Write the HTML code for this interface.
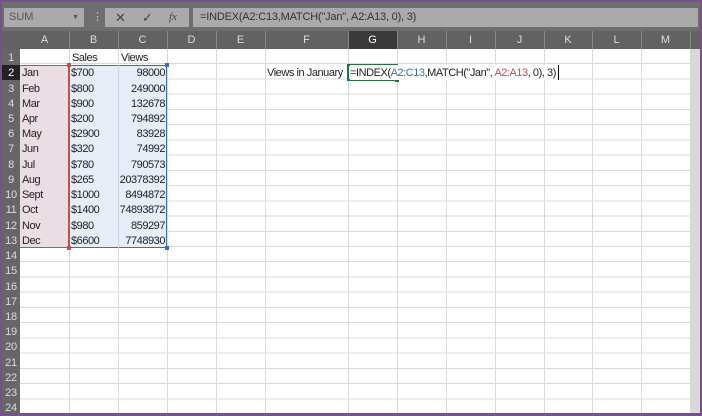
<!DOCTYPE html><html><head><style>
*{margin:0;padding:0;box-sizing:border-box}
body{width:702px;height:415px;overflow:hidden;position:relative;background:#7a4f8e;font-family:"Liberation Sans",sans-serif;font-size:11px;color:#222}
.a{position:absolute}
#tb{left:2px;top:2px;width:698px;height:29px;background:#6e6e6e}
#hdr{left:2px;top:31px;width:698px;height:18px;background:#626262}
#grid{left:20px;top:49px;width:670px;height:364px;background:#fff;
background-image:repeating-linear-gradient(to bottom,transparent 0,transparent 14.23px,#dadada 14.23px,#dadada 15.23px);}
.vl{position:absolute;top:49px;height:364px;width:1px;background:#dadada}
.hl{position:absolute;top:31px;height:18px;width:1px;background:#888}
.ch{position:absolute;top:31px;height:18px;line-height:18px;text-align:center;color:#ddd;font-size:11px}
#rh{left:2px;top:49px;width:18px;height:364px;background:#666}
.rn{position:absolute;left:2px;width:18px;text-align:center;color:#ddd;font-size:11px;height:15px;line-height:16px;letter-spacing:-0.3px}
.c{position:absolute;height:15px;line-height:16px;font-size:11px;letter-spacing:-0.45px;white-space:nowrap}
</style></head><body>
<div class="a" id="tb"></div>
<div class="a" style="left:4px;top:8px;width:80px;height:19px;background:#aaa"></div>
<div class="a" style="left:9px;top:8px;line-height:19px;color:#555;font-size:11px">SUM</div>
<div class="a" style="left:72px;top:8px;line-height:19px;color:#555;font-size:7px">▼</div>
<div class="a" style="left:92px;top:10px;color:#ccc;font-size:11px;line-height:14px">⋮</div>
<div class="a" style="left:105px;top:8px;width:84px;height:19px;background:#aaa"></div>
<div class="a" style="left:115px;top:8px;line-height:19px;color:#444;font-size:13px">✕</div>
<div class="a" style="left:142px;top:8px;line-height:19px;color:#444;font-size:13px">✓</div>
<div class="a" style="left:169px;top:8px;line-height:19px;color:#444;font-size:11px;font-style:italic;font-family:'Liberation Serif',serif">fx</div>
<div class="a" style="left:193px;top:8px;width:505px;height:19px;background:#aaa"></div>
<div class="a" style="left:200px;top:8px;line-height:19px;color:#333;font-size:11px;letter-spacing:-0.2px">=INDEX(A2:C13,MATCH("Jan", A2:A13, 0), 3)</div>
<div class="a" id="hdr"></div>
<div class="a" style="left:348px;top:31px;width:49px;height:18px;background:#3a3a3a"></div>
<div class="a" style="left:690px;top:49px;width:10px;height:364px;background:#d8d8d8"></div>
<div class="a" id="grid"></div>
<div class="a" id="rh"></div>
<div class="ch" style="left:20px;width:49px">A</div>
<div class="ch" style="left:69px;width:49px">B</div>
<div class="ch" style="left:118px;width:49px">C</div>
<div class="ch" style="left:167px;width:49px">D</div>
<div class="ch" style="left:216px;width:49px">E</div>
<div class="ch" style="left:265px;width:83px">F</div>
<div class="ch" style="left:348px;width:49px;color:#fff">G</div>
<div class="ch" style="left:397px;width:49px">H</div>
<div class="ch" style="left:446px;width:49px">I</div>
<div class="ch" style="left:495px;width:49px">J</div>
<div class="ch" style="left:544px;width:48px">K</div>
<div class="ch" style="left:592px;width:49px">L</div>
<div class="ch" style="left:641px;width:49px">M</div>
<div class="hl" style="left:69px"></div><div class="hl" style="left:118px"></div><div class="hl" style="left:167px"></div><div class="hl" style="left:216px"></div><div class="hl" style="left:265px"></div><div class="hl" style="left:348px"></div><div class="hl" style="left:397px"></div><div class="hl" style="left:446px"></div><div class="hl" style="left:495px"></div><div class="hl" style="left:544px"></div><div class="hl" style="left:592px"></div><div class="hl" style="left:641px"></div><div class="hl" style="left:690px"></div>
<div class="a" style="left:20px;top:65px;width:49px;height:183px;background:#eadde4;border:1px solid #c0504d;border-left:none"></div>
<div class="a" style="left:69px;top:65px;width:98px;height:183px;background:#e6edf7;border:1px solid #3f6fb0"></div>
<div class="vl" style="left:69px"></div><div class="vl" style="left:118px"></div><div class="vl" style="left:167px"></div><div class="vl" style="left:216px"></div><div class="vl" style="left:265px"></div><div class="vl" style="left:348px"></div><div class="vl" style="left:397px"></div><div class="vl" style="left:446px"></div><div class="vl" style="left:495px"></div><div class="vl" style="left:544px"></div><div class="vl" style="left:592px"></div><div class="vl" style="left:641px"></div><div class="vl" style="left:690px"></div>
<div class="a" style="left:68px;top:64px;width:2px;height:185px;background:#c0504d"></div>
<div class="a" style="left:20px;top:247px;width:49px;height:1px;background:#c0504d"></div>
<div class="a" style="left:166px;top:65px;width:1px;height:183px;background:#3f6fb0"></div>
<div class="a" style="left:69px;top:65px;width:98px;height:1px;background:#3f6fb0"></div>
<div class="a" style="left:69px;top:247px;width:98px;height:1px;background:#3f6fb0"></div>
<div class="a" style="left:118px;top:65px;width:1px;height:183px;background:#c6d3e6"></div>
<div class="a" style="left:67px;top:63px;width:4px;height:4px;background:#c0504d"></div>
<div class="a" style="left:67px;top:246px;width:4px;height:4px;background:#c0504d"></div>
<div class="a" style="left:165px;top:63px;width:4px;height:4px;background:#3f6fb0"></div>
<div class="a" style="left:165px;top:246px;width:4px;height:4px;background:#3f6fb0"></div>
<div class="a" style="left:347px;top:64px;width:51px;height:17px;border:2px solid #217346"></div>
<div class="a" style="left:395px;top:78px;width:4px;height:4px;background:#217346"></div>
<div class="rn" style="top:50px">1</div>
<div class="rn" style="top:65.2px;background:#222;color:#fff">2</div>
<div class="rn" style="top:80.5px">3</div>
<div class="rn" style="top:95.7px">4</div>
<div class="rn" style="top:110.9px">5</div>
<div class="rn" style="top:126.2px">6</div>
<div class="rn" style="top:141.4px">7</div>
<div class="rn" style="top:156.6px">8</div>
<div class="rn" style="top:171.8px">9</div>
<div class="rn" style="top:187.1px">10</div>
<div class="rn" style="top:202.3px">11</div>
<div class="rn" style="top:217.5px">12</div>
<div class="rn" style="top:232.8px">13</div>
<div class="rn" style="top:248px">14</div>
<div class="rn" style="top:263.2px">15</div>
<div class="rn" style="top:278.5px">16</div>
<div class="rn" style="top:293.7px">17</div>
<div class="rn" style="top:308.9px">18</div>
<div class="rn" style="top:324.1px">19</div>
<div class="rn" style="top:339.4px">20</div>
<div class="rn" style="top:354.6px">21</div>
<div class="rn" style="top:369.8px">22</div>
<div class="rn" style="top:385.1px">23</div>
<div class="rn" style="top:400.3px">24</div>
<div class="c" style="left:72px;top:50px">Sales</div>
<div class="c" style="left:121px;top:50px">Views</div>
<div class="c" style="left:22px;top:65.2px">Jan</div><div class="c" style="left:71px;top:65.2px">$700</div><div class="c" style="left:118px;width:47px;text-align:right;top:65.2px">98000</div>
<div class="c" style="left:22px;top:80.5px">Feb</div><div class="c" style="left:71px;top:80.5px">$800</div><div class="c" style="left:118px;width:47px;text-align:right;top:80.5px">249000</div>
<div class="c" style="left:22px;top:95.7px">Mar</div><div class="c" style="left:71px;top:95.7px">$900</div><div class="c" style="left:118px;width:47px;text-align:right;top:95.7px">132678</div>
<div class="c" style="left:22px;top:110.9px">Apr</div><div class="c" style="left:71px;top:110.9px">$200</div><div class="c" style="left:118px;width:47px;text-align:right;top:110.9px">794892</div>
<div class="c" style="left:22px;top:126.2px">May</div><div class="c" style="left:71px;top:126.2px">$2900</div><div class="c" style="left:118px;width:47px;text-align:right;top:126.2px">83928</div>
<div class="c" style="left:22px;top:141.4px">Jun</div><div class="c" style="left:71px;top:141.4px">$320</div><div class="c" style="left:118px;width:47px;text-align:right;top:141.4px">74992</div>
<div class="c" style="left:22px;top:156.6px">Jul</div><div class="c" style="left:71px;top:156.6px">$780</div><div class="c" style="left:118px;width:47px;text-align:right;top:156.6px">790573</div>
<div class="c" style="left:22px;top:171.8px">Aug</div><div class="c" style="left:71px;top:171.8px">$265</div><div class="c" style="left:118px;width:47px;text-align:right;top:171.8px">20378392</div>
<div class="c" style="left:22px;top:187.1px">Sept</div><div class="c" style="left:71px;top:187.1px">$1000</div><div class="c" style="left:118px;width:47px;text-align:right;top:187.1px">8494872</div>
<div class="c" style="left:22px;top:202.3px">Oct</div><div class="c" style="left:71px;top:202.3px">$1400</div><div class="c" style="left:118px;width:47px;text-align:right;top:202.3px">74893872</div>
<div class="c" style="left:22px;top:217.5px">Nov</div><div class="c" style="left:71px;top:217.5px">$980</div><div class="c" style="left:118px;width:47px;text-align:right;top:217.5px">859297</div>
<div class="c" style="left:22px;top:232.8px">Dec</div><div class="c" style="left:71px;top:232.8px">$6600</div><div class="c" style="left:118px;width:47px;text-align:right;top:232.8px">7748930</div>
<div class="c" style="left:267px;top:65.2px">Views in January</div>
<div class="c" style="left:350px;top:65.2px;background:#fff;padding-right:2px;border-right:1px solid #000">=INDEX(<span style="color:#3f6fb0">A2:C13</span>,MATCH("Jan", <span style="color:#c0504d">A2:A13</span>, 0), 3)</div>
</body></html>
